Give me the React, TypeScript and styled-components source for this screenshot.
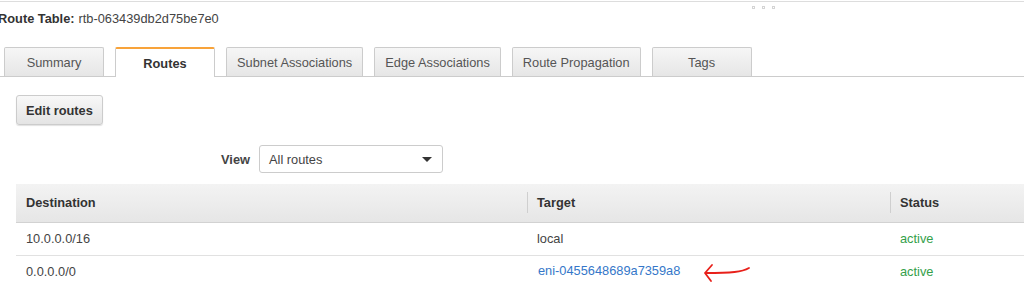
import { createGlobalStyle, styled } from 'styled-components';

const GlobalStyle = createGlobalStyle`
    html, body {
        margin: 0;
        padding: 0;
        background: #fff;
        overflow: hidden;
    }
    body {
        font-family: "Liberation Sans", Arial, sans-serif;
        font-size: 12.8px;
        color: #444;
    }
`;

const Page = styled.div`
    position: relative;
    margin-top: 1px;
    border-top: 1px solid #ddd;
    height: 306px;
`;

// little resize grip on the top edge
const Grip = styled.div`
    position: absolute;
    top: 4px;
    left: 752px;
    display: flex;
    gap: 7px;
    span {
        width: 1px;
        height: 1px;
        border: 1px solid #d4d4d4;
    }
`;

const Title = styled.div`
    margin: 9px 0 0 -2px;
    line-height: 16px;
    color: #444;
    b {
        color: #333;
        margin-right: 4px;
    }
`;

const TabBar = styled.div`
    display: flex;
    align-items: flex-end;
    gap: 11px;
    margin-top: 20px;
    padding-left: 4px;
    height: 29px;
    border-bottom: 1px solid #ccc;
`;

const Tab = styled.div<{ $active?: boolean }>`
    box-sizing: border-box;
    min-width: 100px;
    padding: 0 10px;
    display: flex;
    align-items: center;
    justify-content: center;
    border: 1px solid #ccc;
    border-bottom: none;
    border-top: ${(p) => (p.$active ? '2px solid #f8a33a' : '1px solid #ccc')};
    border-radius: 2px 2px 0 0;
    height: ${(p) => (p.$active ? '30px' : '29px')};
    margin-bottom: ${(p) => (p.$active ? '-1px' : '0')};
    background: ${(p) => (p.$active ? '#fff' : 'linear-gradient(#f6f6f6, #e6e6e6)')};
    color: ${(p) => (p.$active ? '#333' : '#555')};
    font-weight: ${(p) => (p.$active ? 700 : 400)};
    white-space: nowrap;
`;

const Body = styled.div`
    padding-left: 16px;
`;

const Button = styled.button`
    box-sizing: border-box;
    margin-top: 18px;
    height: 30px;
    padding: 0 9px;
    font-family: inherit;
    font-size: 12.8px;
    font-weight: 700;
    color: #333;
    background: linear-gradient(#f8f8f8, #e4e4e4);
    border: 1px solid #ccc;
    border-radius: 3px;
    box-shadow: 0 1px 1px rgba(0, 0, 0, 0.12);
`;

const FilterRow = styled.div`
    display: flex;
    align-items: center;
    margin-top: 20px;
`;

const FilterLabel = styled.label`
    width: 234px;
    margin-right: 9px;
    text-align: right;
    font-weight: 700;
    color: #444;
`;

const Select = styled.div`
    box-sizing: border-box;
    width: 184px;
    height: 28px;
    padding: 0 9px;
    display: flex;
    align-items: center;
    justify-content: space-between;
    border: 1px solid #ccc;
    border-radius: 3px;
    color: #444;
`;

const Caret = styled.span`
    width: 0;
    height: 0;
    border-left: 5px solid transparent;
    border-right: 5px solid transparent;
    border-top: 5px solid #333;
    margin-right: 1px;
`;

const Table = styled.table`
    margin-top: 11px;
    width: 100%;
    table-layout: fixed;
    border-collapse: collapse;
`;

const Th = styled.th<{ $divider?: boolean }>`
    position: relative;
    box-sizing: border-box;
    height: 38px;
    padding: 0 10px;
    text-align: left;
    font-weight: 700;
    color: #333;
    background: linear-gradient(#f3f3f3, #e6e6e6);
    border-bottom: 1px solid #d2d2d2;
    &::before {
        content: '';
        display: ${(p) => (p.$divider ? 'block' : 'none')};
        position: absolute;
        left: 0;
        top: 8px;
        bottom: 9px;
        border-left: 1px solid #cfcfcf;
    }
`;

const Row = styled.tr`
    &:last-child td {
        border-bottom: none;
    }
`;

const Td = styled.td`
    height: 32px;
    padding: 0 10px;
    color: #444;
    border-bottom: 1px solid #e1e1e1;
    white-space: nowrap;
`;

const TargetLink = styled.a`
    color: #3577c9;
    text-decoration: none;
    padding-left: 1px;
`;

const Status = styled.span`
    color: #34a04a;
`;

const Arrow = styled.svg`
    margin-left: 22px;
    vertical-align: middle;
    position: relative;
    top: 1px;
`;

const routes = [
    { destination: '10.0.0.0/16', target: 'local', link: false, status: 'active' },
    { destination: '0.0.0.0/0', target: 'eni-0455648689a7359a8', link: true, status: 'active' },
];

const tabs = ['Summary', 'Routes', 'Subnet Associations', 'Edge Associations', 'Route Propagation', 'Tags'];

export default function App() {
    return (
        <>
            <GlobalStyle />
            <Page>
                <Grip>
                    <span />
                    <span />
                    <span />
                </Grip>
                <Title>
                    <b>Route Table:</b>rtb-063439db2d75be7e0
                </Title>
                <TabBar>
                    {tabs.map((t) => (
                        <Tab key={t} $active={t === 'Routes'}>
                            {t}
                        </Tab>
                    ))}
                </TabBar>
                <Body>
                    <Button>Edit routes</Button>
                    <FilterRow>
                        <FilterLabel>View</FilterLabel>
                        <Select>
                            All routes
                            <Caret />
                        </Select>
                    </FilterRow>
                    <Table>
                        <colgroup>
                            <col style={{ width: 511 }} />
                            <col style={{ width: 363 }} />
                            <col />
                        </colgroup>
                        <thead>
                            <tr>
                                <Th>Destination</Th>
                                <Th $divider>Target</Th>
                                <Th $divider>Status</Th>
                            </tr>
                        </thead>
                        <tbody>
                            {routes.map((r) => (
                                <Row key={r.destination}>
                                    <Td>{r.destination}</Td>
                                    <Td>
                                        {r.link ? (
                                            <>
                                                <TargetLink href="#">{r.target}</TargetLink>
                                                <Arrow width="50" height="20" viewBox="0 0 50 20">
                                                    <path
                                                        d="M47 5 C40 9 30 10 3 10 M10 2 L3 10 L9 18"
                                                        fill="none"
                                                        stroke="#e8201a"
                                                        strokeWidth="1.8"
                                                        strokeLinecap="round"
                                                        strokeLinejoin="round"
                                                    />
                                                </Arrow>
                                            </>
                                        ) : (
                                            r.target
                                        )}
                                    </Td>
                                    <Td>
                                        <Status>{r.status}</Status>
                                    </Td>
                                </Row>
                            ))}
                        </tbody>
                    </Table>
                </Body>
            </Page>
        </>
    );
}
